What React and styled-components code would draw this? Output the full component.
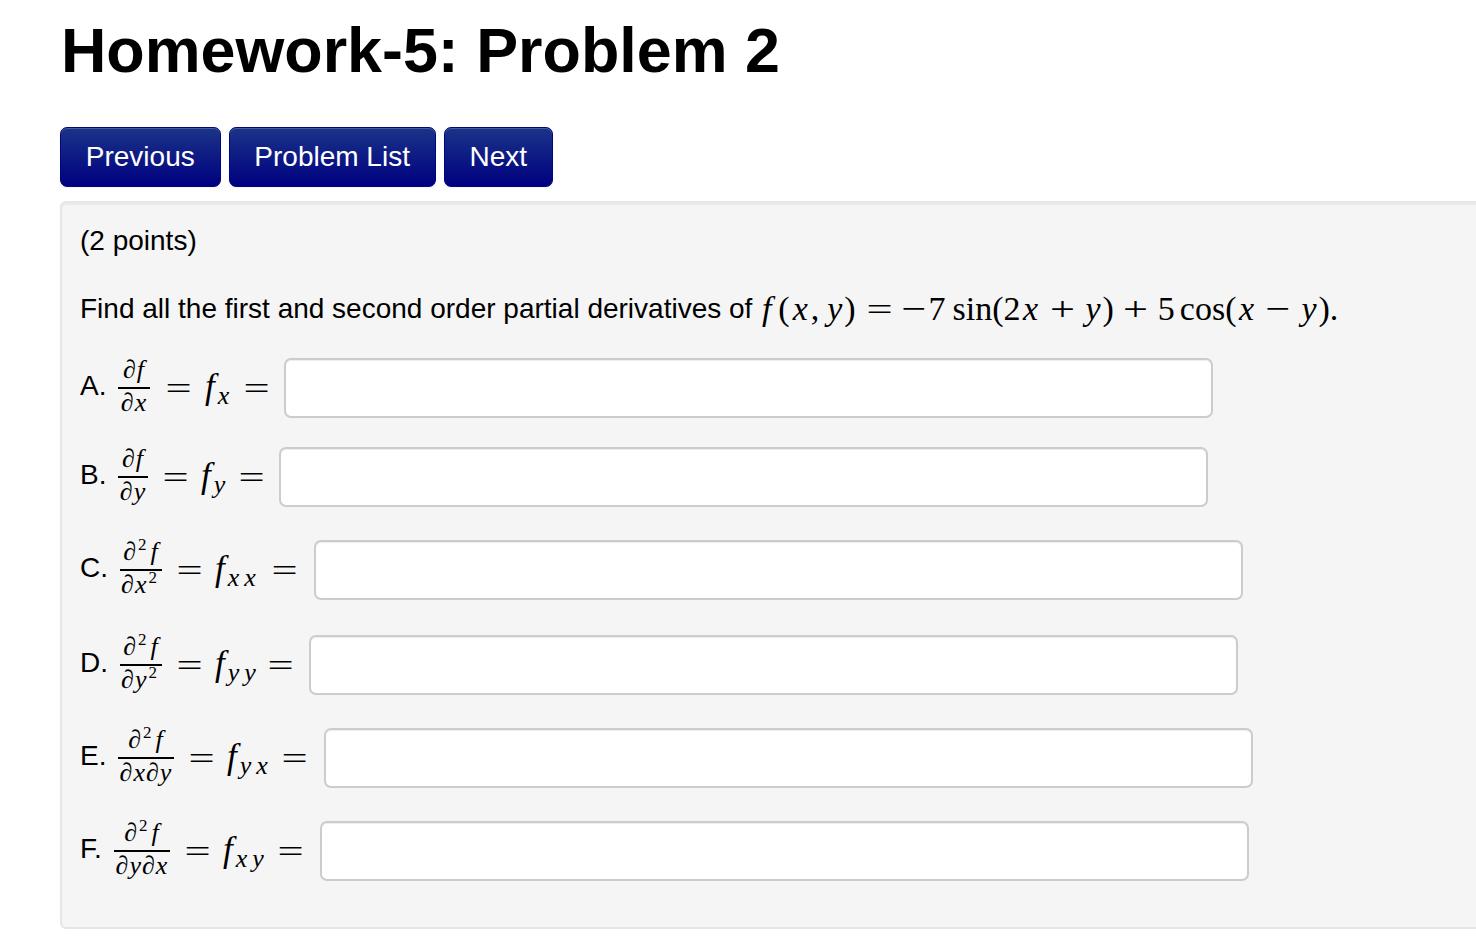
import React from 'react';
import styled, { createGlobalStyle } from 'styled-components';

const GlobalStyle = createGlobalStyle`
  html, body {
    margin: 0;
    padding: 0;
    background: #fff;
    overflow: hidden;
  }
  body {
    width: 1476px;
    height: 948px;
    font-family: "Liberation Sans", Arial, sans-serif;
    color: #000;
  }
`;

const Page = styled.div`
  padding: 0 0 0 60px;
  width: 1600px;
`;

const Title = styled.h1`
  margin: 0;
  padding-left: 1px;
  height: 127px;
  font-size: 62.8px;
  line-height: 100px;
  font-weight: 700;
`;

const Toolbar = styled.div`
  display: flex;
  gap: 8px;
  margin-bottom: 14px;
`;

const NavButton = styled.a`
  display: block;
  box-sizing: border-box;
  height: 60px;
  padding: 0 24.8px;
  font-size: 28px;
  line-height: 58px;
  color: #fff;
  border: 1px solid #00067c;
  border-radius: 7px;
  background: linear-gradient(#1a3488, #000080);
  box-shadow: inset 0 1px 0 rgba(255, 255, 255, 0.2), 0 1px 2px rgba(0, 0, 0, 0.05);
`;

const Panel = styled.div`
  box-sizing: border-box;
  width: 1480px;
  height: 728px;
  padding: 18px 18px 0;
  background: #f5f5f5;
  border: 2px solid #e6e6e6;
  border-radius: 6px;
  box-shadow: inset 0 2px 2px rgba(0, 0, 0, 0.05);
`;

const Points = styled.div`
  font-size: 28px;
  line-height: 40px;
  margin-bottom: 27px;
`;

const Question = styled.div`
  display: flex;
  align-items: baseline;
  height: 44px;
  margin-bottom: 26px;
  font-size: 28px;
`;

const Formula = styled.span`
  display: inline-flex;
  align-items: baseline;
  margin-left: ${(p) => p.$left || 0}px;
  font-family: "Liberation Serif", "Times New Roman", serif;
  font-size: 34px;
  transform: translateY(2px);
`;

const Var = styled.i`
  display: inline-block;
  width: ${(p) => p.$w}px;
  text-align: center;
`;

const Txt = styled.span`
  display: inline-block;
  margin-left: ${(p) => p.$ml || 0}px;
  margin-right: ${(p) => p.$mr || 0}px;
`;

const Op = styled.span`
  display: inline-block;
  width: ${(p) => p.$w || 25}px;
  margin: 0 ${(p) => p.$m || 9}px;
  text-align: center;
  transform: scaleX(1.3);
`;

const Row = styled.div`
  display: flex;
  align-items: center;
  height: 60px;
  margin-bottom: ${(p) => p.$after}px;
`;

const Lead = styled.div`
  display: flex;
  align-items: center;
  flex: none;
  width: ${(p) => p.$w}px;
  font-family: "Liberation Serif", "Times New Roman", serif;
`;

const Letter = styled.span`
  flex: none;
  width: ${(p) => p.$w}px;
  margin-top: -4px;
  font-family: "Liberation Sans", Arial, sans-serif;
  font-size: 28px;
`;

const Fraction = styled.span`
  display: flex;
  flex: none;
  flex-direction: column;
  align-items: center;
  width: ${(p) => p.$w}px;
`;

const Top = styled.span`
  display: block;
  width: 100%;
  height: 30px;
  font-size: 26px;
  line-height: 25px;
  letter-spacing: 1px;
  text-align: center;
  border-bottom: 2px solid #000;
  white-space: nowrap;
`;

const Bottom = styled.span`
  display: block;
  height: 30px;
  font-size: 26px;
  line-height: 28px;
  letter-spacing: 1px;
  text-align: center;
  white-space: nowrap;
`;

const Sup = styled.sup`
  margin: 0 3px 0 1px;
  font-size: 17px;
  line-height: 0;
  font-style: normal;
`;

const Equals = styled.span`
  display: inline-block;
  flex: none;
  width: 25px;
  margin: ${(p) => p.$m || '0'};
  font-size: 32px;
  line-height: 30px;
  text-align: center;
  transform: scaleX(1.45);
`;

const Fn = styled.i`
  flex: none;
  width: ${(p) => p.$w}px;
  margin-left: -2px;
  margin-top: -2px;
  font-size: 35px;
  font-weight: 500;
  white-space: nowrap;
`;

const FnSub = styled.span`
  position: relative;
  top: 6px;
  margin-left: 3px;
  font-size: 26px;
  letter-spacing: 5px;
`;

const Answer = styled.input`
  flex: none;
  box-sizing: border-box;
  width: 929px;
  height: 60px;
  padding: 0 14px;
  background: #fff;
  border: 2px solid #ccc;
  border-radius: 7px;
  box-shadow: inset 0 1px 1px rgba(0, 0, 0, 0.075);
  outline: none;
`;

const rows = [
  { letter: 'A.', lw: 38, fw: 32, top: <i>∂f</i>, bottom: <i>∂x</i>, gap: 16, fn: 'x', fnw: 39, after: 29, lead: 204 },
  { letter: 'B.', lw: 38, fw: 30, top: <i>∂f</i>, bottom: <i>∂y</i>, gap: 15, fn: 'y', fnw: 38, after: 33, lead: 199 },
  { letter: 'C.', lw: 40, fw: 42, top: <i>∂<Sup>2</Sup>f</i>, bottom: <i>∂x<Sup>2</Sup></i>, gap: 15, fn: 'xx', fnw: 57, after: 35, lead: 234 },
  { letter: 'D.', lw: 40, fw: 42, top: <i>∂<Sup>2</Sup>f</i>, bottom: <i>∂y<Sup>2</Sup></i>, gap: 15, fn: 'yy', fnw: 53, after: 33, lead: 229 },
  { letter: 'E.', lw: 38, fw: 56, top: <i>∂<Sup>2</Sup>f</i>, bottom: <i>∂x∂y</i>, gap: 15, fn: 'yx', fnw: 55, after: 33, lead: 244 },
  { letter: 'F.', lw: 34, fw: 56, top: <i>∂<Sup>2</Sup>f</i>, bottom: <i>∂y∂x</i>, gap: 15, fn: 'xy', fnw: 55, after: 0, lead: 240 },
];

export default function App() {
  return (
    <Page>
      <GlobalStyle />
      <Title>Homework-5: Problem 2</Title>
      <Toolbar>
        <NavButton>Previous</NavButton>
        <NavButton>Problem List</NavButton>
        <NavButton>Next</NavButton>
      </Toolbar>
      <Panel>
        <Points>(2 points)</Points>
        <Question>
          Find all the first and second order partial derivatives of
          <Formula $left={5}>
            <Var $w={19}>f</Var>
            <Txt $ml={2}>(</Txt>
            <Var $w={21}>x</Var>
            <Txt $mr={6}>,</Txt>
            <Var $w={19}>y</Var>
            <Txt>)</Txt>
            <Equals $m="0 0 0 11px">=</Equals>
            <Op $m={9}>−</Op>
            <Txt $ml={-6}>7</Txt>
            <Txt $ml={7}>sin(2</Txt>
            <Var $w={20}>x</Var>
            <Op $m={9}>+</Op>
            <Var $w={19}>y</Var>
            <Txt>)</Txt>
            <Op $m={9.5}>+</Op>
            <Txt>5</Txt>
            <Txt $ml={5}>cos(</Txt>
            <Var $w={20}>x</Var>
            <Op $m={9}>−</Op>
            <Var $w={19}>y</Var>
            <Txt>).</Txt>
          </Formula>
        </Question>
        {rows.map((r) => (
          <Row key={r.letter} $after={r.after}>
            <Lead $w={r.lead}>
              <Letter $w={r.lw}>{r.letter}</Letter>
              <Fraction $w={r.fw}>
                <Top>{r.top}</Top>
                <Bottom>{r.bottom}</Bottom>
              </Fraction>
              <Equals $m={`0 ${r.gap}px`}>=</Equals>
              <Fn $w={r.fnw}>
                f<FnSub>{r.fn}</FnSub>
              </Fn>
              <Equals>=</Equals>
            </Lead>
            <Answer type="text" />
          </Row>
        ))}
      </Panel>
    </Page>
  );
}
